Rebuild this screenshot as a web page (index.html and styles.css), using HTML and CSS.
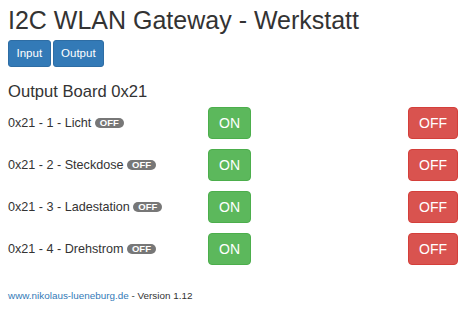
FILE: index.html
```html
<!DOCTYPE html>
<html>
<head>
<meta charset="utf-8">
<link rel="stylesheet" href="styles.css">
</head>
<body>
<div class="page">
  <h1 class="title">I2C WLAN Gateway - Werkstatt</h1>
  <div class="nav">
    <a class="btn btn-primary">Input</a>
    <a class="btn btn-primary">Output</a>
  </div>
  <h2 class="board">Output Board 0x21</h2>
  <div class="rows">
    <div class="row">
      <div class="label">0x21 - 1 - Licht <span class="badge">OFF</span></div>
      <div class="cell"><a class="btn btn-lg btn-on">ON</a></div>
      <div class="cell"><a class="btn btn-lg btn-off">OFF</a></div>
    </div>
    <div class="row">
      <div class="label">0x21 - 2 - Steckdose <span class="badge">OFF</span></div>
      <div class="cell"><a class="btn btn-lg btn-on">ON</a></div>
      <div class="cell"><a class="btn btn-lg btn-off">OFF</a></div>
    </div>
    <div class="row">
      <div class="label">0x21 - 3 - Ladestation <span class="badge">OFF</span></div>
      <div class="cell"><a class="btn btn-lg btn-on">ON</a></div>
      <div class="cell"><a class="btn btn-lg btn-off">OFF</a></div>
    </div>
    <div class="row">
      <div class="label">0x21 - 4 - Drehstrom <span class="badge">OFF</span></div>
      <div class="cell"><a class="btn btn-lg btn-on">ON</a></div>
      <div class="cell"><a class="btn btn-lg btn-off">OFF</a></div>
    </div>
  </div>
  <p class="footer"><a class="link">www.nikolaus-lueneburg.de</a> - Version 1.12</p>
</div>
</body>
</html>
```
FILE: styles.css
```css
html, body {
  margin: 0;
  padding: 0;
  background: #fff;
}
body {
  font-family: "Liberation Sans", Arial, sans-serif;
  color: #333;
}
.page {
  padding: 6px 8px 0 8px;
}
.title {
  margin: 0;
  font-size: 25px;
  line-height: 28px;
  font-weight: normal;
  color: #333;
}
.nav {
  display: flex;
  gap: 2px;
  margin-top: 6px;
}
.btn {
  display: inline-block;
  color: #fff;
  text-decoration: none;
  border-radius: 3px;
  box-sizing: border-box;
  text-align: center;
}
.btn-primary {
  background: #337ab7;
  border: 1px solid #2e6da4;
  font-size: 11.5px;
  height: 27px;
  line-height: 25px;
  padding: 0 7.5px;
}
.board {
  margin: 15px 0 0 0;
  font-size: 16.6px;
  line-height: 20px;
  font-weight: normal;
  color: #333;
}
.rows {
  margin-top: 5px;
  display: flex;
  flex-direction: column;
  gap: 10px;
}
.row {
  display: grid;
  grid-template-columns: 200px 200px auto;
  align-items: center;
  height: 32px;
}
.label {
  font-size: 12.6px;
  display: flex;
  align-items: center;
  white-space: pre;
}
.badge {
  display: inline-block;
  background: #777;
  color: #fff;
  font-size: 9.5px;
  font-weight: bold;
  line-height: 10px;
  padding: 0 5px;
  border-radius: 10px;
}
.btn-lg {
  font-size: 14px;
  height: 32px;
  line-height: 30px;
  padding: 0 10px;
  border-radius: 4px;
}
.btn-on {
  background: #5cb85c;
  border: 1px solid #4cae4c;
}
.btn-off {
  background: #d9534f;
  border: 1px solid #d43f3a;
}
.footer {
  margin: 24px 0 0 0;
  font-size: 9.9px;
  line-height: 14px;
  color: #333;
}
.link {
  color: #337ab7;
  text-decoration: none;
}
```
